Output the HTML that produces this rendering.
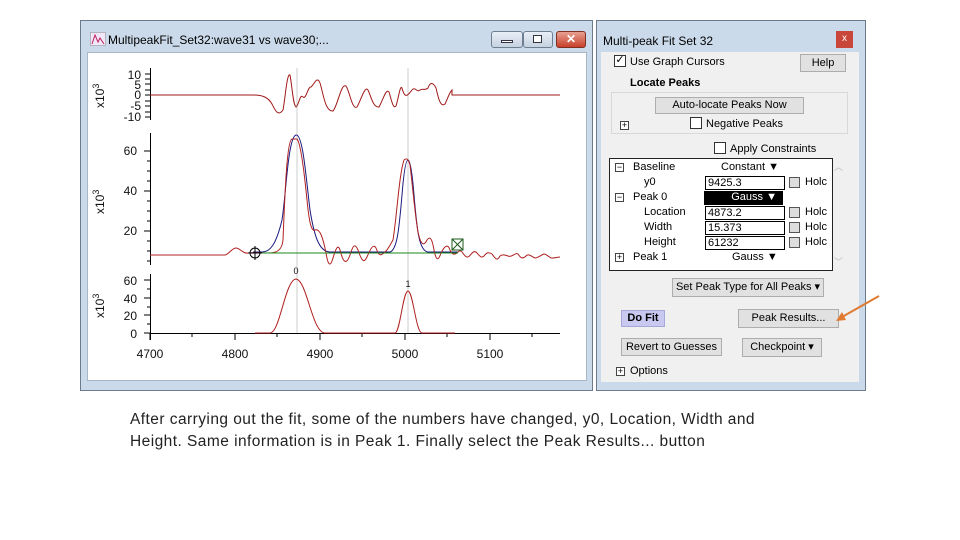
<!DOCTYPE html>
<html><head><meta charset="utf-8"><style>
*{margin:0;padding:0;box-sizing:border-box}
body{width:960px;height:540px;background:#fff;position:relative;overflow:hidden;font-family:"Liberation Sans",sans-serif}
.a{position:absolute}
.t{font-size:11px;color:#000;white-space:nowrap}
.btn{position:absolute;background:#e1e1e1;border:1px solid #adadad;font-size:11px;text-align:center;color:#000}
.cb{position:absolute;width:12px;height:12px;border:1px solid #333;background:#fff}
.inp{position:absolute;background:#fff;border:1px solid #000;font-size:11px;padding-left:2px;height:14px;line-height:12px}
.hold{position:absolute;width:11px;height:11px;border:1px solid #555;background:#ddd}
.pm{position:absolute;width:9px;height:9px;border:1px solid #444;font-size:9px;line-height:7px;text-align:center;background:#fff}
</style></head><body>
<!-- left window -->
<div class="a" style="left:80px;top:20px;width:513px;height:371px;background:#cbdaea;border:1px solid #6d7a8a"></div>
<div class="a" style="left:87px;top:52px;width:500px;height:329px;background:#fff;border:1px solid #a9b6c6"></div>
<div class="a t" style="left:108px;top:33px;font-size:12px">MultipeakFit_Set32:wave31 vs wave30;...</div>
<svg class="a" style="left:90px;top:32px" width="16" height="14"><rect x="0.5" y="0.5" width="15" height="13" fill="#f0e8f8" stroke="#888" stroke-dasharray="1 1"/><path d="M2 12 L5 3 L8 10 L10 6 L14 12" fill="none" stroke="#c02060"/></svg>
<div class="a" style="left:491px;top:31px;width:32px;height:17px;background:linear-gradient(#e8eef6,#c6d2e0);border:1px solid #6f7f92;border-radius:3px"></div>
<div class="a" style="left:501px;top:40px;width:12px;height:3px;border:1px solid #334;background:#fff"></div>
<div class="a" style="left:523px;top:31px;width:30px;height:17px;background:linear-gradient(#e8eef6,#c6d2e0);border:1px solid #6f7f92;border-radius:3px"></div>
<div class="a" style="left:533px;top:35px;width:9px;height:8px;border:1px solid #334;background:#fff"></div>
<div class="a" style="left:556px;top:31px;width:30px;height:17px;background:linear-gradient(#e8a090,#c8402c);border:1px solid #803020;border-radius:3px;color:#fff;font-size:12px;font-weight:bold;text-align:center;line-height:15px">✕</div>
<svg class="a" style="left:0;top:0" width="600" height="400" font-family="Liberation Sans" font-size="12">
<g stroke="#ccc" stroke-width="1"><line x1="297" y1="68" x2="297" y2="333"/><line x1="408" y1="68" x2="408" y2="333"/></g>
<g stroke="#000" stroke-width="1" fill="none">
<line x1="150.5" y1="68" x2="150.5" y2="120"/>
<line x1="150.5" y1="133" x2="150.5" y2="265"/>
<line x1="150.5" y1="274" x2="150.5" y2="340"/>
<line x1="150" y1="333.5" x2="560" y2="333.5"/>
<path d="M145 74H150M145 79H150M145 84H150M145 90H150M145 95H150M145 101H150M145 106H150M145 112H150M145 117H150"/>
<path d="M144 151H150M147 161H150M147 171H150M147 181H150M144 191H150M147 201H150M147 211H150M147 221H150M144 231H150M147 241H150M147 251H150M147 261H150"/>
<path d="M144 280H150M147 289H150M144 298H150M147 307H150M144 315H150M147 324H150M144 333H150"/>
<path d="M150 333V340M235 333V340M320 333V340M405 333V340M490 333V340M192 333V337M277 333V337M362 333V337M447 333V337M532 333V337"/>
</g>
<g fill="#111" text-anchor="end">
<text x="141" y="79">10</text><text x="141" y="89">5</text><text x="141" y="99">0</text><text x="141" y="110">-5</text><text x="141" y="121">-10</text>
<text x="137" y="155">60</text><text x="137" y="195">40</text><text x="137" y="235">20</text>
<text x="137" y="285">60</text><text x="137" y="303">40</text><text x="137" y="320">20</text><text x="137" y="338">0</text>
</g>
<g fill="#111" text-anchor="middle"><text x="150" y="358">4700</text><text x="235" y="358">4800</text><text x="320" y="358">4900</text><text x="405" y="358">5000</text><text x="490" y="358">5100</text>
<text x="296" y="274" font-size="9">0</text><text x="408" y="287" font-size="9">1</text></g>
<text transform="translate(104,108) rotate(-90)" fill="#111">x10<tspan dy="-5" font-size="9">3</tspan></text>
<text transform="translate(104,214) rotate(-90)" fill="#111">x10<tspan dy="-5" font-size="9">3</tspan></text>
<text transform="translate(104,318) rotate(-90)" fill="#111">x10<tspan dy="-5" font-size="9">3</tspan></text>
<path d="M150 95H254C262 95 268 97 272 104C275 110 278 117 283 110C285 100 287 72 290 75C292 85 293 105 296 107C299 105 300 93 303 97C306 100 308 86 311 87C314 85 317 75 320 83C323 92 325 112 333 111C338 105 341 83 346 86C350 92 352 110 357 107C361 100 365 85 368 90C371 96 373 108 379 107C383 100 386 88 389 92C391 98 393 110 396 106C399 96 400 85 402 88C405 100 408 95 412 90C415 86 417 93 420 90C423 88 425 91 428 88C430 82 433 82 436 88C438 96 440 108 445 104C448 98 449 93 452 90V95H560" fill="none" stroke="#a01818"/>
<path d="M253 252H262C270 252 276 245 282 220C286 195 288 137 296 135C303 134 306 178 310 210C314 235 319 252 330 252H390C397 250 399 230 402 195C404 170 406 160 408 160C410 160 412 170 414 195C417 230 419 251 428 252H458" fill="none" stroke="#1a1a80"/>
<path d="M150 255H225C228 255 232 248 236 248C240 248 243 254 248 253C254 252 262 253 268 253C276 253 282 251 283 240C285 190 287 140 292 139H297C301 143 305 180 307 200C309 220 311 232 315 230C320 228 323 238 326 253C328 265 330 268 333 258C336 248 338 244 340 250C343 262 346 266 350 255C353 245 355 243 358 250C362 262 364 263 367 257C370 250 373 243 376 248C379 256 380 256 384 253C388 250 390 245 393 240C397 215 399 175 404 160C406 158 408 158 410 165C413 190 415 215 418 232C421 246 424 246 427 240C430 236 432 238 434 250C436 260 438 262 441 253C445 245 448 244 450 250C452 254 454 256 458 252C462 248 463 256 467 257C470 258 472 250 476 252C479 255 481 259 484 256C487 252 489 252 492 254C495 258 497 262 500 256C503 254 505 255 508 256C512 258 515 252 518 254C520 257 522 260 526 256C529 253 532 257 535 258C538 258 541 255 544 254C547 254 550 259 553 258C556 258 558 257 560 257" fill="none" stroke="#b02020"/>
<line x1="256" y1="253" x2="458" y2="253" stroke="#1a8a1a"/>
<circle cx="255" cy="253" r="5" fill="none" stroke="#000"/><path d="M248 253H262M255 246V260" stroke="#000"/>
<rect x="452" y="239" width="11" height="11" fill="none" stroke="#1a5a1a"/><path d="M452 239L463 250M463 239L452 250" stroke="#1a5a1a"/>
<path d="M255 333H270C280 333 285 280 296 279C307 280 312 333 325 333H395C400 333 403 291 408 291C413 291 416 333 422 333H455" fill="none" stroke="#b02020"/>
</svg>

<!-- right window -->
<div class="a" style="left:596px;top:20px;width:270px;height:371px;background:#cbdaea;border:1px solid #6d7a8a"></div>
<div class="a" style="left:601px;top:52px;width:258px;height:330px;background:#f0f0f0"></div>
<div class="a t" style="left:603px;top:34px;font-size:12px">Multi-peak Fit Set 32</div>
<div class="a" style="left:836px;top:31px;width:17px;height:17px;background:#c8463a;color:#fff;font-size:10px;text-align:center;line-height:16px">x</div>
<div class="cb" style="left:614px;top:55px;font-size:11px;line-height:9px;text-align:center">✓</div>
<div class="a t" style="left:630px;top:56px">Use Graph Cursors</div>
<div class="btn" style="left:800px;top:54px;width:46px;height:18px;line-height:16px">Help</div>
<div class="a" style="left:611px;top:92px;width:237px;height:42px;border:1px solid #d8d8d8"></div>
<div class="a t" style="left:627px;top:77px;font-weight:bold;background:#f0f0f0;padding:0 3px">Locate Peaks</div>
<div class="btn" style="left:655px;top:97px;width:149px;height:17px;line-height:15px">Auto-locate Peaks Now</div>
<div class="pm" style="left:620px;top:121px">+</div>
<div class="cb" style="left:690px;top:117px"></div>
<div class="a t" style="left:706px;top:118px">Negative Peaks</div>
<div class="cb" style="left:714px;top:142px"></div>
<div class="a t" style="left:730px;top:143px">Apply Constraints</div>
<div class="a" style="left:609px;top:158px;width:224px;height:113px;background:#fff;border:1px solid #222"></div>
<div class="a t" style="left:834px;top:160px;color:#bbb;font-size:9px">︿</div>
<div class="a t" style="left:834px;top:255px;color:#bbb;font-size:9px">﹀</div>
<div class="pm" style="left:615px;top:163px">−</div><div class="a t" style="left:633px;top:161px">Baseline</div><div class="a t" style="left:721px;top:161px">Constant ▼</div>
<div class="a t" style="left:644px;top:176px">y0</div><div class="inp" style="left:705px;top:176px;width:80px">9425.3</div><div class="hold" style="left:789px;top:177px"></div><div class="a t" style="left:805px;top:176px">Holc</div>
<div class="pm" style="left:615px;top:193px">−</div><div class="a t" style="left:633px;top:191px">Peak 0</div><div class="a t" style="left:704px;top:191px;width:79px;height:14px;background:#000;color:#fff;text-align:right;padding-right:6px">Gauss ▼</div>
<div class="a t" style="left:644px;top:206px">Location</div><div class="inp" style="left:705px;top:206px;width:80px">4873.2</div><div class="hold" style="left:789px;top:207px"></div><div class="a t" style="left:805px;top:206px">Holc</div>
<div class="a t" style="left:644px;top:221px">Width</div><div class="inp" style="left:705px;top:221px;width:80px">15.373</div><div class="hold" style="left:789px;top:222px"></div><div class="a t" style="left:805px;top:221px">Holc</div>
<div class="a t" style="left:644px;top:236px">Height</div><div class="inp" style="left:705px;top:236px;width:80px">61232</div><div class="hold" style="left:789px;top:237px"></div><div class="a t" style="left:805px;top:236px">Holc</div>
<div class="pm" style="left:615px;top:253px">+</div><div class="a t" style="left:633px;top:251px">Peak 1</div><div class="a t" style="left:732px;top:251px">Gauss ▼</div>
<div class="btn" style="left:672px;top:278px;width:152px;height:19px;line-height:17px">Set Peak Type for All Peaks ▾</div>
<div class="btn" style="left:621px;top:310px;width:44px;height:17px;line-height:15px;background:#c8c8f0;border-color:#a8a8d8;font-weight:bold">Do Fit</div>
<div class="btn" style="left:738px;top:309px;width:101px;height:19px;line-height:17px">Peak Results...</div>
<div class="btn" style="left:621px;top:338px;width:101px;height:18px;line-height:16px">Revert to Guesses</div>
<div class="btn" style="left:742px;top:338px;width:80px;height:19px;line-height:17px">Checkpoint ▾</div>
<div class="pm" style="left:616px;top:367px">+</div><div class="a t" style="left:630px;top:365px">Options</div>
<svg class="a" style="left:830px;top:290px" width="56" height="36"><line x1="49" y1="6" x2="12" y2="27" stroke="#e07a30" stroke-width="2"/><path d="M6 31L12 22L16 30Z" fill="#e07a30"/></svg>

<div class="a" style="left:130px;top:409px;font-size:15.5px;letter-spacing:0.45px;color:#222;line-height:22px;width:760px;white-space:nowrap">After carrying out the fit, some of the numbers have changed, y0, Location, Width and<br>Height. Same information is in Peak 1. Finally select the Peak Results... button</div>
</body></html>
